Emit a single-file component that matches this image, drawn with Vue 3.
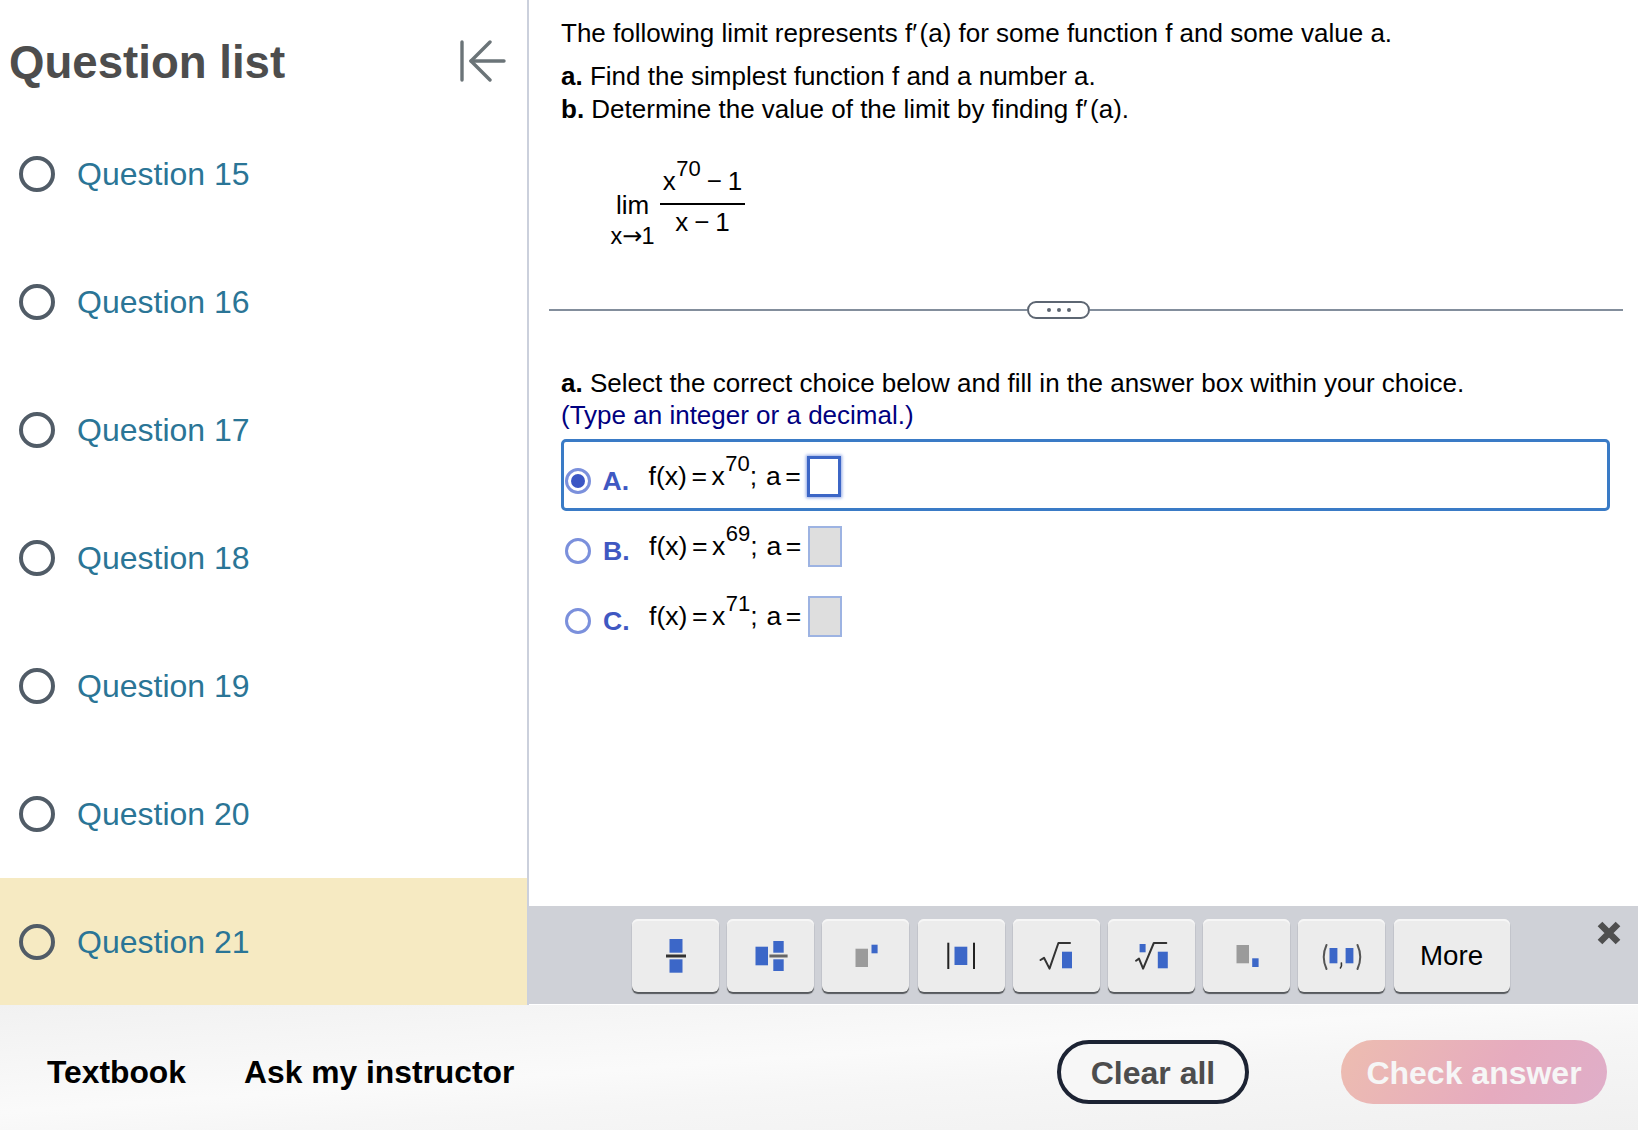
<script setup>
const questions = [15, 16, 17, 18, 19, 20, 21]
const choices = [
  { letter: 'A', exp: '70', selected: true },
  { letter: 'B', exp: '69', selected: false },
  { letter: 'C', exp: '71', selected: false }
]
const B = '#3c67c8'
const G = '#9b9b9b'
const tools = [
  { rects: [[-6.5, -17, 13, 13.7, B], [-6.5, 3.3, 13, 13.4, B], [-10, -1.5, 20, 3, '#333']], paths: [] },
  { rects: [[-15.5, -9.3, 12.5, 18.6, B], [2.3, -15, 10.4, 11.7, B], [2.3, 3.3, 10.4, 11.7, B], [-1.6, -1.5, 18.2, 3, '#666']], paths: [] },
  { rects: [[-10.5, -7.3, 12.5, 18.3, G], [5.5, -11.3, 6.1, 8.6, B]], paths: [] },
  { rects: [[-6.5, -9.3, 12.8, 18.3, B], [-13.7, -13.3, 2, 26.3, '#222'], [12, -13.3, 2, 26.3, '#222']], paths: [] },
  { rects: [[6, -4.3, 10, 16.6, B]], paths: [['M-15.5 4 L-12 1.8 L-6.5 12.6 L2.4 -13 H14', '#333', 2]] },
  { rects: [[-11.4, -12, 6, 8.3, B], [6.8, -4.3, 10, 16.6, B]], paths: [['M-15 4.7 L-12 2.6 L-7.9 12.6 L2.8 -13 H15.3', '#333', 2]] },
  { rects: [[-10.5, -11, 12.5, 18.3, G], [5.2, 2.3, 6.4, 8.7, B]], paths: [] },
  { rects: [[-12.5, -8, 7.9, 15.3, B], [3.6, -8, 7.8, 15.3, B]], paths: [['M-15.5 -11 Q-21 1 -15.5 13', '#555', 2], ['M15.5 -11 Q21 1 15.5 13', '#555', 2], ['M-0.6 7 Q0 10 -1.6 12', '#333', 1.6]] }
]
</script>

<template>
  <div class="page">
    <div class="top">
      <aside class="side">
        <header class="side-head">
          <h1 class="side-title">Question list</h1>
          <svg class="collapse" width="46" height="42" viewBox="0 0 46 42" fill="none" stroke="#6b7478" stroke-width="3.4" stroke-linecap="round" stroke-linejoin="round">
            <path d="M2 2 V40" />
            <path d="M11 21 H44" />
            <path d="M30 2 L11 21 L30 40" />
          </svg>
        </header>
        <ul class="q-list">
          <li v-for="q in questions" :key="q" class="q-row" :class="{ current: q === 21 }">
            <span class="q-dot"></span>
            <span class="q-name">Question {{ q }}</span>
          </li>
        </ul>
      </aside>

      <main class="main">
        <section class="work">
          <p class="line">The following limit represents f<span class="prime">′</span>(a) for some function f and some value a.</p>
          <div class="parts">
            <p class="line"><b>a.</b> Find the simplest function f and a number a.</p>
            <p class="line"><b>b.</b> Determine the value of the limit by finding f<span class="prime">′</span>(a).</p>
          </div>

          <div class="limit">
            <div class="lim-col">
              <span class="lim">lim</span>
              <span class="lim-sub">x<span class="arrow">→</span>1</span>
            </div>
            <div class="frac">
              <div class="num">x<sup class="sup">70</sup><span class="minus">−</span>1</div>
              <div class="den">x<span class="minus">−</span>1</div>
            </div>
          </div>

          <div class="divider">
            <span class="rule rule-left"></span>
            <span class="pill"><i></i><i></i><i></i></span>
            <span class="rule rule-right"></span>
          </div>

          <p class="line select"><b>a.</b> Select the correct choice below and fill in the answer box within your choice.</p>
          <p class="line hint">(Type an integer or a decimal.)</p>

          <div class="choices">
            <div v-for="c in choices" :key="c.letter" class="choice" :class="{ on: c.selected }">
              <span class="radio"><i v-if="c.selected"></i></span>
              <span class="letter">{{ c.letter }}.</span>
              <span class="expr">f(x)<span class="eq">=</span>x<sup class="sup">{{ c.exp }}</sup>; a<span class="eq">=</span></span>
              <span class="box"></span>
            </div>
          </div>
        </section>

        <section class="toolbar">
          <button v-for="(t, i) in tools" :key="i" class="tool">
            <svg width="48" height="40" viewBox="-24 -20 48 40" fill="none">
              <rect v-for="(r, j) in t.rects" :key="j" :x="r[0]" :y="r[1]" :width="r[2]" :height="r[3]" :fill="r[4]" />
              <path v-for="(p, j) in t.paths" :key="'p' + j" :d="p[0]" :stroke="p[1]" :stroke-width="p[2]" stroke-linecap="round" stroke-linejoin="round" />
            </svg>
          </button>
          <button class="tool more">More</button>
          <svg class="close" width="24" height="24" viewBox="0 0 24 24" fill="none" stroke="#4f4f4f" stroke-width="6.6">
            <path d="M3 3 L21 21 M21 3 L3 21" />
          </svg>
        </section>
      </main>
    </div>

    <footer class="foot">
      <a class="foot-link first">Textbook</a>
      <a class="foot-link second">Ask my instructor</a>
      <button class="btn clear">Clear all</button>
      <button class="btn check">Check answer</button>
    </footer>
  </div>
</template>

<style scoped>
.page {
  width: 1638px;
  height: 1130px;
  overflow: hidden;
  display: flex;
  flex-direction: column;
  background: #fff;
  font-family: "Liberation Sans", Arial, sans-serif;
  color: #000;
}
.top {
  display: flex;
  height: 1005px;
}
.side {
  width: 529px;
  flex: none;
  border-right: 2px solid #cbd0dc;
  box-sizing: border-box;
  display: flex;
  flex-direction: column;
  overflow: hidden;
}
.side-head {
  height: 110px;
  flex: none;
  display: flex;
  align-items: flex-start;
  justify-content: space-between;
  padding: 0 21px 0 9px;
  box-sizing: border-box;
}
.side-title {
  margin: 36px 0 0;
  font-size: 45.6px;
  line-height: 54px;
  font-weight: 700;
  color: #4d4d4d;
}
.collapse {
  margin-top: 40px;
}
.q-list {
  list-style: none;
  margin: 0;
  padding: 0;
}
.q-row {
  height: 128px;
  display: flex;
  align-items: center;
  padding-left: 19px;
}
.q-row.current {
  background: #f6eac2;
}
.q-dot {
  width: 36px;
  height: 36px;
  box-sizing: border-box;
  border: 4px solid #515c67;
  border-radius: 50%;
  flex: none;
}
.q-name {
  margin-left: 22px;
  font-size: 32px;
  color: #2a7596;
}
.main {
  flex: 1;
  min-width: 0;
  display: flex;
  flex-direction: column;
}
.work {
  flex: 1;
  padding: 17px 0 0 32px;
}
.line {
  margin: 0;
  font-size: 26px;
  line-height: 33px;
  white-space: nowrap;
}
.prime {
  margin-right: 2.5px;
}
.parts {
  margin-top: 10px;
}
.limit {
  margin-top: 36px;
  margin-left: 47px;
  display: flex;
  align-items: flex-start;
  height: 88px;
}
.lim-col {
  width: 49px;
  padding-top: 29px;
  display: flex;
  flex-direction: column;
  align-items: center;
  font-size: 26px;
}
.lim {
  line-height: 28px;
}
.lim-sub {
  margin-top: 3px;
  line-height: 28px;
  font-size: 23.5px;
  white-space: nowrap;
}
.arrow {
  font-family: "DejaVu Sans", sans-serif;
  font-size: 24px;
  letter-spacing: -1px;
}
.frac {
  margin-left: 3px;
  width: 85px;
  font-size: 26px;
  text-align: center;
}
.num {
  height: 41px;
  line-height: 38px;
  border-bottom: 2px solid #000;
  white-space: nowrap;
}
.den {
  line-height: 34px;
}
.minus {
  margin: 0 6px;
}
.sup {
  font-size: 22px;
  line-height: 0;
  vertical-align: 14px;
  margin-left: 0.5px;
}
.divider {
  margin: 51px 15px 0 -12px;
  height: 18px;
  display: flex;
  align-items: center;
}
.rule {
  height: 2px;
  background: #838e9c;
}
.rule-left {
  width: 478px;
}
.rule-right {
  flex: 1;
}
.pill {
  width: 63px;
  height: 18px;
  box-sizing: border-box;
  border: 2px solid #5d6672;
  border-radius: 9px;
  background: #fff;
  display: flex;
  align-items: center;
  justify-content: center;
  gap: 6px;
}
.pill i {
  width: 4px;
  height: 4px;
  border-radius: 50%;
  background: #5d6672;
}
.select {
  margin-top: 48px;
}
.hint {
  margin-top: -1px;
  color: #000080;
}
.choices {
  margin-top: 7px;
  width: 1049px;
}
.choice {
  height: 70px;
  box-sizing: border-box;
  display: flex;
  align-items: center;
  padding: 4px 0 0 4px;
  border-radius: 5px;
}
.choice.on {
  height: 72px;
  margin-bottom: -2px;
  border: 3.5px solid #3a7bc6;
  padding: 2px 0 0 0.5px;
}
.radio {
  width: 26px;
  height: 26px;
  box-sizing: border-box;
  border: 3px solid #7b90dc;
  border-radius: 50%;
  flex: none;
  margin-top: 10px;
  display: flex;
  align-items: center;
  justify-content: center;
}
.radio i {
  width: 14px;
  height: 14px;
  border-radius: 50%;
  background: #3b56c4;
}
.letter {
  width: 46px;
  margin-left: 12px;
  flex: none;
  margin-top: 11px;
  font-size: 26.6px;
  font-weight: 700;
  color: #3f58c2;
}
.expr {
  font-size: 26.6px;
  white-space: nowrap;
  word-spacing: 1.5px;
}
.eq {
  margin: 0 4.5px;
}
.box {
  width: 34px;
  height: 41px;
  box-sizing: border-box;
  margin-left: 2px;
  background: #dedede;
  border: 2px solid #9db3e2;
}
.on .box {
  background: #fff;
  border: 3px solid #3c66c6;
  box-shadow: 0 0 3px 1px #8fa6e4;
}
.toolbar {
  height: 99px;
  flex: none;
  box-sizing: border-box;
  border-bottom: 1px solid #fff;
  background: #cfd1d7;
  display: flex;
  align-items: flex-start;
  gap: 8.2px;
  padding: 13px 17px 0 103px;
}
.tool {
  width: 87px;
  height: 73px;
  padding: 0;
  border: none;
  border-radius: 6px;
  background: #ececec;
  box-shadow: 0 2px 1px #55585c, inset 0 2px 0 #f6f6f6;
  display: flex;
  align-items: center;
  justify-content: center;
  flex: none;
}
.more {
  width: 116px;
  font-family: inherit;
  font-size: 27.7px;
  color: #000;
}
.close {
  margin-left: auto;
  margin-top: 2px;
}
.foot {
  flex: 1;
  display: flex;
  align-items: center;
  padding-top: 8px;
  background: linear-gradient(176deg, #f1f1f1 0%, #fafafa 45%, #f6f6f6 60%, #f0f0f0 100%);
}
.foot-link {
  font-size: 31.8px;
  font-weight: 700;
  color: #000;
  padding-top: 2px;
}
.first {
  margin-left: 47px;
}
.second {
  margin-left: 58px;
}
.btn {
  height: 64px;
  border-radius: 32px;
  font-family: inherit;
  font-size: 32px;
  font-weight: 700;
  padding: 3px 0 0;
  box-sizing: border-box;
}
.clear {
  width: 192px;
  margin-left: auto;
  border: 4px solid #1c2333;
  background: #f7f7f7;
  color: #4d4d4d;
}
.check {
  width: 266px;
  margin: 0 31px 0 92px;
  border: none;
  background: linear-gradient(120deg, #edbdb0 0%, #e6abbf 60%, #dfaec9 100%);
  color: #f6f6f6;
}
</style>
